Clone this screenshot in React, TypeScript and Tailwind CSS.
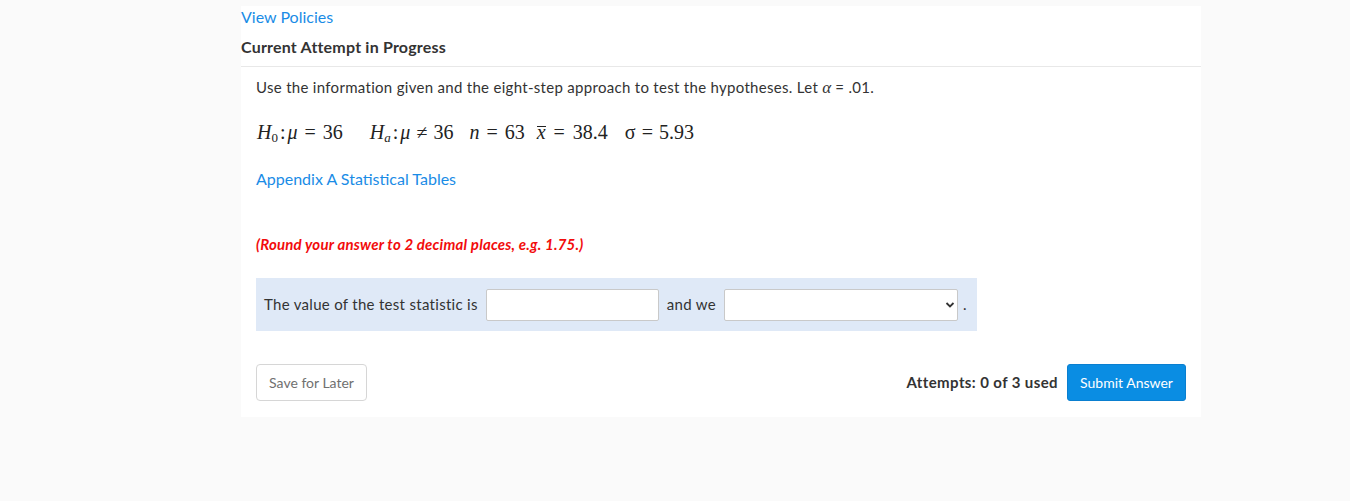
import React from "react";

const lato = { fontFamily: "Lato, 'Noto Sans', sans-serif" };

export default function App() {
  return (
    <div className="min-h-[501px] bg-[#fafafa] pt-[6px] text-[#333]" style={lato}>
      <div className="ml-[241px] w-[960px] bg-white">
        {/* header */}
        <div className="pb-[8px]">
          <a className="block text-[16px] leading-[22px] text-[#1a8ce6]">View Policies</a>
          <h2 className="mt-[8px] text-[16px] font-bold leading-[22px] tracking-[0.2px] text-[#333]">
            Current Attempt in Progress
          </h2>
        </div>
        <div className="border-t border-[#e8e8e8] px-[15px] pt-[8px] pb-[16px]">
          <p className="text-[15px] leading-[24px] tracking-[0.3px]">
            Use the information given and the eight-step approach to test the hypotheses. Let{" "}
            <span className="italic font-['Liberation_Serif',serif] text-[17px] tracking-normal">α</span> = .01.
          </p>

          {/* math */}
          <div className="mt-[20px] flex items-baseline whitespace-nowrap text-[20px] leading-[24px] text-[#222] font-['Liberation_Serif','DejaVu_Serif',serif]">
            <span className="pl-[1px]">
              <i>H</i>
              <sub className="text-[13px]">0</sub>
              <span className="ml-[2px] mr-[2px]">:</span>
              <i>μ</i>
              <span className="mx-[7px]">=</span>36
            </span>
            <span className="ml-[27px]">
              <i>H</i>
              <sub className="text-[13px] italic">a</sub>
              <span className="ml-[2px] mr-[2px]">:</span>
              <i>μ</i>
              <span className="mx-[6px]">≠</span>36
            </span>
            <span className="ml-[16px]">
              <i>n</i>
              <span className="mx-[7px]">=</span>63
            </span>
            <span className="ml-[12px]">
              <i className="inline-block border-t border-[#222] leading-[11px]">x</i>
              <span className="mx-[8px]">=</span>38.4
            </span>
            <span className="ml-[17px]">
              σ<span className="mx-[6px]">=</span>5.93
            </span>
          </div>

          <a className="mt-[23px] block text-[16px] leading-[24px] text-[#1a8ce6]">Appendix A Statistical Tables</a>

          <p className="mt-[41px] text-[15px] font-bold italic leading-[24px] tracking-[0.2px] text-[#f20c0c]">
            (Round your answer to 2 decimal places, e.g. 1.75.)
          </p>

          {/* answer row */}
          <div className="mt-[22px] flex h-[53px] w-[721px] items-center bg-[#dfe9f7] pl-[8px] text-[15px] tracking-[0.3px]">
            <span>The value of the test statistic is</span>
            <input
              type="text"
              className="ml-[8px] h-[32px] w-[173px] rounded-[2px] border border-[#c9c9c9] bg-white outline-none"
            />
            <span className="ml-[8px]">and we</span>
            <div className="relative ml-[8px] h-[32px] w-[234px] rounded-[2px] border border-[#c9c9c9] bg-white">
              <svg
                className="absolute right-[2px] top-[11px]"
                width="10"
                height="8"
                viewBox="0 0 10 8"
                fill="none"
                stroke="#333"
                strokeWidth="1.8"
              >
                <path d="M1.5 2l3.5 3.5L8.5 2" />
              </svg>
            </div>
            <span className="ml-[5px]">.</span>
          </div>

          {/* footer */}
          <div className="mt-[33px] flex items-center justify-between">
            <button className="h-[37px] w-[111px] rounded-[4px] border border-[#d6d6d6] bg-white text-[14px] text-[#707070]">
              Save for Later
            </button>
            <div className="flex items-center">
              <span className="text-[15px] font-bold tracking-[0.4px] text-[#333]">Attempts: 0 of 3 used</span>
              <button className="ml-[9px] h-[37px] w-[119px] rounded-[3px] border border-[#0a7fd0] bg-[#0a8de3] text-[14px] text-white">
                Submit Answer
              </button>
            </div>
          </div>
        </div>
      </div>
    </div>
  );
}
